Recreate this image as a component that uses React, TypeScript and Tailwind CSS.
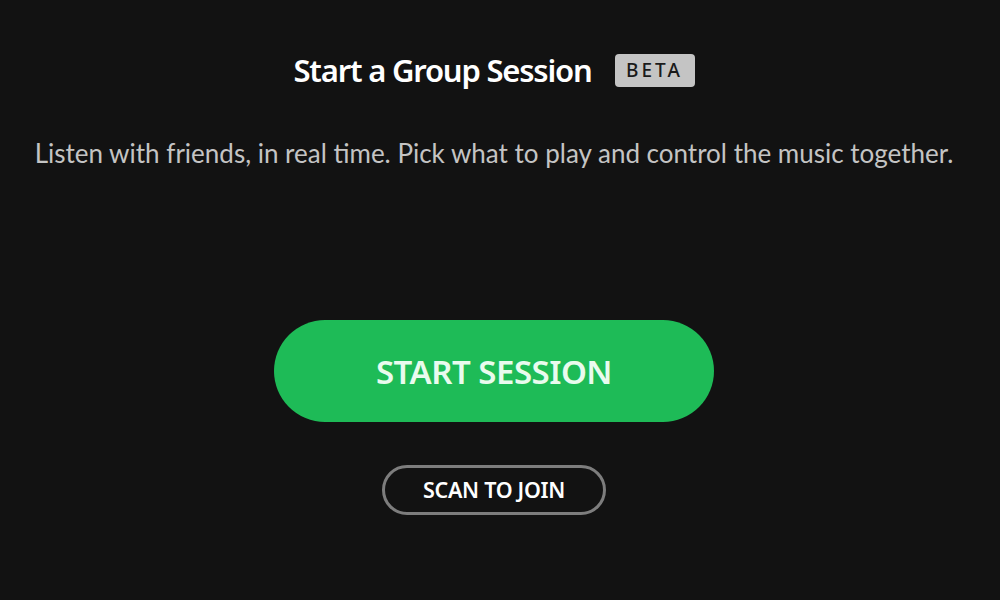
import React from "react";

export default function App() {
  return (
    <div className="w-[1000px] h-[600px] bg-[#121212] flex flex-col items-center pr-[12px]" style={{ fontFamily: '"Noto Sans", sans-serif' }}>
      <div className="flex items-center mt-[54px] h-[33px]">
        <h1 className="text-[31px] font-semibold text-white tracking-[-1.2px] leading-none">Start a Group Session</h1>
        <span className="ml-[23px] w-[80px] h-[33px] flex items-center justify-center rounded-[4px] bg-[#c4c4c4] text-[#1a1a1a] text-[19px] font-medium tracking-[3px] leading-none">BETA</span>
      </div>
      <p className="mt-[53px] text-[26px] text-[#c4c4c4] leading-none" style={{ fontFamily: '"Lato", sans-serif' }}>
        Listen with friends, in real time. Pick what to play and control the music together.
      </p>
      <button className="mt-[154px] w-[440px] h-[102px] rounded-full bg-[#1ebb57] text-[#e9fbee] text-[33px] font-semibold tracking-[-0.5px] leading-none">
        START SESSION
      </button>
      <button className="mt-[43px] w-[224px] h-[50px] rounded-full border-[3px] border-[#7d7d7d] text-white text-[21.5px] font-semibold tracking-[-0.3px] leading-none">
        SCAN TO JOIN
      </button>
    </div>
  );
}
